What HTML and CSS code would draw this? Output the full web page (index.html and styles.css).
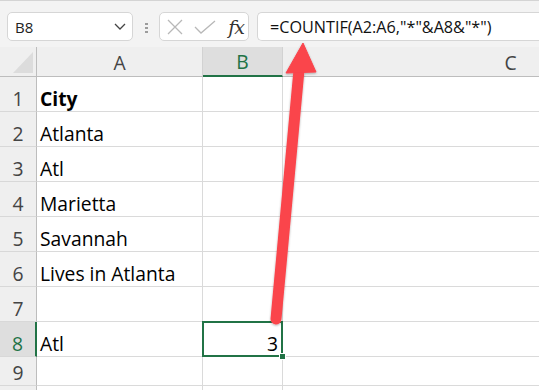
FILE: index.html
```html
<!DOCTYPE html>
<html lang="en">
<head>
  <meta charset="UTF-8" />
  <title>COUNTIF wildcard</title>
  <link rel="stylesheet" href="styles.css">
</head>
<body>

  <div class="toolbar">
    <div class="name-box">
      <span>B8</span>
      <svg width="12" height="7" viewBox="0 0 12 7"><path d="M1 1 L6 6 L11 1" fill="none" stroke="#444" stroke-width="1.3"/></svg>
    </div>
    <div class="grip"><i></i><i></i><i></i></div>
    <div class="fx-box">
      <svg width="16" height="16" viewBox="0 0 16 16"><path d="M1 1 L15 15 M15 1 L1 15" stroke="#b8b8b8" stroke-width="1.3" fill="none"/></svg>
      <svg width="22" height="14" viewBox="0 0 22 14"><path d="M1 7 L7 13 L21 1" stroke="#b8b8b8" stroke-width="1.3" fill="none"/></svg>
      <span class="fx">fx</span>
    </div>
    <div class="formula">=COUNTIF(A2:A6,"*"&amp;A8&amp;"*")</div>
  </div>

  <div class="sheet">
    <div class="hd corner"></div>
    <div class="hd">A</div>
    <div class="hd active-col">B</div>
    <div class="hd">C</div>

    <div class="rh">1</div><div class="c"><b>City</b></div><div class="c"></div><div class="c"></div>
    <div class="rh">2</div><div class="c">Atlanta</div><div class="c"></div><div class="c"></div>
    <div class="rh">3</div><div class="c">Atl</div><div class="c"></div><div class="c"></div>
    <div class="rh">4</div><div class="c">Marietta</div><div class="c"></div><div class="c"></div>
    <div class="rh">5</div><div class="c">Savannah</div><div class="c"></div><div class="c"></div>
    <div class="rh">6</div><div class="c">Lives in Atlanta</div><div class="c"></div><div class="c"></div>
    <div class="rh">7</div><div class="c"></div><div class="c"></div><div class="c"></div>
    <div class="rh active-row">8</div><div class="c">Atl</div><div class="c num sel">3</div><div class="c"></div>
    <div class="rh">9</div><div class="c"></div><div class="c"></div><div class="c"></div>
    <div class="rh"></div><div class="c"></div><div class="c"></div><div class="c"></div>
  </div>

  <!-- callout arrow pointing at the formula -->
  <svg class="arrow" width="539" height="390" viewBox="0 0 539 390">
    <defs>
      <filter id="shadow" x="-20%" y="-20%" width="140%" height="140%">
        <feDropShadow dx="0" dy="1" stdDeviation="1.2" flood-color="#000" flood-opacity="0.3"/>
      </filter>
    </defs>
    <g filter="url(#shadow)" fill="#fa444c" stroke="#fa444c">
      <line x1="276" y1="319" x2="299" y2="70" stroke-width="11" stroke-linecap="round"/>
      <polygon points="303,43 286,73 316,72" stroke-width="1" stroke-linejoin="round"/>
    </g>
  </svg>

</body>
</html>
```

FILE: styles.css
```css
body {
  margin: 0;
  padding: 0;
  width: 539px;
  height: 390px;
  overflow: hidden;
  position: relative;
  background-color: #ffffff;
  font-family: "Open Sans", "Noto Sans", sans-serif;
  color: #000;
}

.toolbar {
  height: 47px;
  box-sizing: border-box;
  border-top: 1px solid #d4d4d4;
  background-color: #f3f3f3;
  display: flex;
  align-items: flex-start;
  padding: 11px 0 0 7px;
  overflow: hidden;
}

.name-box {
  width: 126px;
  height: 29px;
  box-sizing: border-box;
  background: #fff;
  border: 1px solid #d6d6d6;
  border-radius: 5px;
  display: flex;
  align-items: center;
  justify-content: space-between;
  padding: 0 6px 0 7px;
  font-size: 15px;
  color: #222;
}

.grip {
  display: flex;
  flex-direction: column;
  gap: 2px;
  margin: 11px 11px 0 12px;
}

.grip i {
  width: 3px;
  height: 2px;
  background: #9c9c9c;
}

.fx-box {
  width: 90px;
  height: 29px;
  box-sizing: border-box;
  background: #fff;
  border: 1px solid #d6d6d6;
  border-radius: 5px;
  display: flex;
  align-items: center;
  padding: 0 4px 0 7px;
  gap: 11px;
}

.fx {
  font-family: "DejaVu Serif", "Liberation Serif", serif;
  font-style: italic;
  font-size: 19px;
  color: #333;
  margin-left: auto;
  letter-spacing: -1px;
}

.formula {
  flex: 1;
  height: 29px;
  box-sizing: border-box;
  margin-left: 8px;
  background: #fff;
  border: 1px solid #d6d6d6;
  border-right: none;
  border-radius: 5px 0 0 5px;
  padding: 0 0 0 12px;
  font-size: 16.2px;
  line-height: 28px;
  color: #111;
  white-space: nowrap;
}

.sheet {
  width: 539px;
  height: 343px;
  overflow: hidden;
  display: grid;
  grid-template-columns: 37px 166px 80px 456px;
  grid-template-rows: 30px repeat(8, 35px) 29px 35px;
  font-size: 19.3px;
}

.hd,
.rh {
  background-color: #efefef;
  color: #444;
  display: flex;
  align-items: flex-end;
  justify-content: center;
  box-sizing: border-box;
  line-height: 25px;
}

.hd {
  border-right: 1px solid #d2d2d2;
  border-bottom: 1px solid #bdbdbd;
  padding-bottom: 1px;
}

.rh {
  border-right: 1px solid #bdbdbd;
  border-bottom: 1px solid #d8d8d8;
  padding-bottom: 0;
}

.corner {
  position: relative;
  border-right-color: #bdbdbd;
}

.corner::after {
  content: "";
  position: absolute;
  right: 3px;
  bottom: 3px;
  width: 20px;
  height: 21px;
  background: #dcdcdc;
  clip-path: polygon(100% 0, 100% 100%, 0 100%);
}

.active-col {
  background-color: #dedede;
  color: #217346;
  border-bottom: 2px solid #217346;
}

.active-row {
  background-color: #dedede;
  color: #217346;
  border-right: 2px solid #217346;
}

.c {
  box-sizing: border-box;
  border-right: 1px solid #dadada;
  border-bottom: 1px solid #dadada;
  display: flex;
  align-items: flex-end;
  padding: 0 0 0 3px;
  line-height: 25px;
  white-space: nowrap;
}

.num {
  justify-content: flex-end;
  padding-right: 4px;
}

.sel {
  position: relative;
}

.sel::before {
  content: "";
  position: absolute;
  left: -1px;
  top: -1px;
  right: -1px;
  bottom: -1px;
  border: 2px solid #217346;
}

.sel::after {
  content: "";
  position: absolute;
  right: -4px;
  bottom: -4px;
  width: 5px;
  height: 5px;
  background: #217346;
  border: 1px solid #fff;
}

.arrow {
  position: absolute;
  left: 0;
  top: 0;
  pointer-events: none;
}
```
